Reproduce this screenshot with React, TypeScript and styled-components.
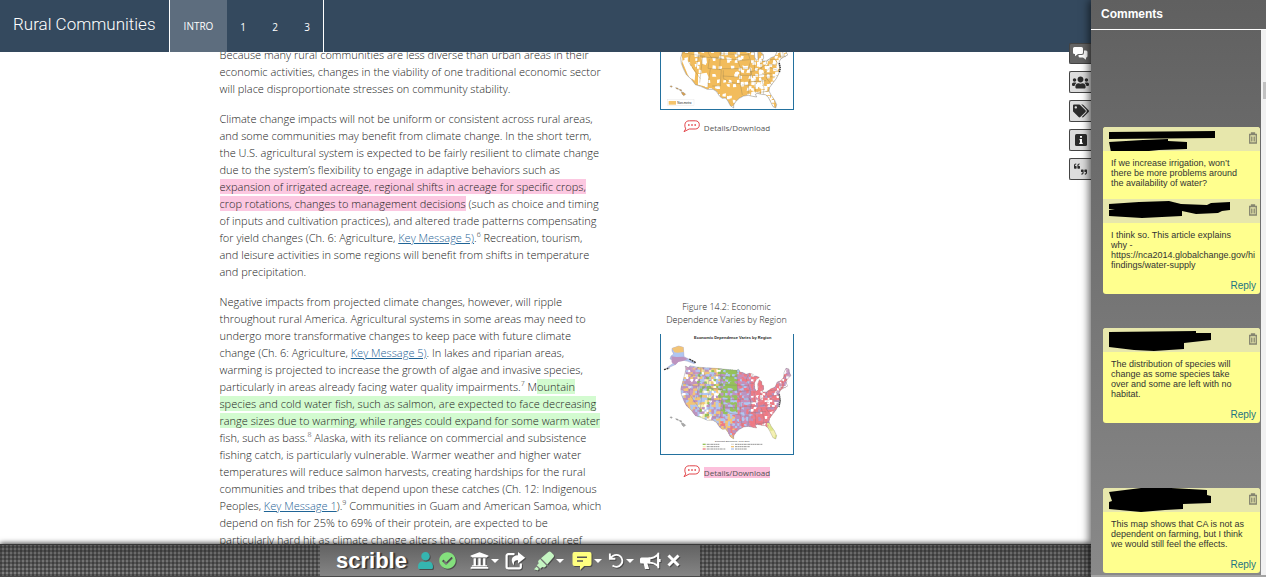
import React from "react";
import styled, { createGlobalStyle } from "styled-components";
import {
  FaCheckCircle,
  FaHighlighter,
  FaQuoteLeft,
  FaQuoteRight,
  FaTags,
  FaUniversity,
  FaUser,
  FaUsers,
} from "react-icons/fa";

const GlobalStyle = createGlobalStyle`
  * { box-sizing: border-box; }
  body { margin: 0; background: #fff; font-family: "Open Sans", "Noto Sans", sans-serif; }
  button { padding: 0; border: 0; background: none; font: inherit; color: inherit; cursor: pointer; }
  p, h1, h2, figure { margin: 0; }
`;

const Page = styled.div`
  display: grid;
  grid-template-columns: minmax(0, 1fr) 175px;
  height: 100vh;
  overflow: hidden;
`;

const Main = styled.main`
  position: relative;
  display: flex;
  flex-direction: column;
  min-height: 0;
  overflow: hidden;
`;

/* Header */

const Header = styled.header`
  display: flex;
  flex: none;
  height: 52px;
  background: #34495e;
  color: #fff;
`;

const Title = styled.h1`
  min-width: 170px;
  padding: 0 13px 0 13px;
  border-right: 1px solid #fff;
  font: 300 17px/49px Roboto, sans-serif;
  white-space: nowrap;
`;

const Nav = styled.nav`
  display: flex;
  border-right: 1px solid #fff;
`;

const NavLink = styled.a<{ $active?: boolean }>`
  min-width: ${(p) => (p.$active ? 57 : 32)}px;
  background: ${(p) => (p.$active ? "#5d6d7e" : "transparent")};
  color: #fff;
  font-size: 10px;
  line-height: ${(p) => (p.$active ? 53 : 55)}px;
  text-align: center;
  text-decoration: none;
`;

/* Article */

const Reader = styled.div`
  flex: 1;
  min-height: 0;
  padding-right: 2px;
  overflow: hidden;
`;

const Article = styled.article`
  display: grid;
  grid-template-columns: 375px 134px;
  column-gap: 65px;
  max-width: 650px;
  margin: -6px auto 0;
`;

const Prose = styled.div`
  display: flex;
  flex-direction: column;
  gap: 13px;
  color: #222;
  font-size: 11px;
  font-weight: 300;
  line-height: 17px;
  white-space: nowrap;

  a {
    color: #1f6496;
  }

  sup {
    font-size: 7px;
    line-height: 0;
  }
`;

const Mark = styled.mark<{ $tone: "pink" | "green" }>`
  background: ${(p) => (p.$tone === "pink" ? "#fcc8e1" : "#d3fbd0")};
  color: inherit;
`;

const Figures = styled.aside`
  display: flex;
  flex-direction: column;
  gap: 167px;
`;

const Figure = styled.figure`
  display: flex;
  flex-direction: column;
`;

const Caption = styled.figcaption`
  padding-bottom: 8px;
  color: #222;
  font-size: 9px;
  font-weight: 300;
  line-height: 13px;
  text-align: center;
`;

const MapFrame = styled.div`
  border: 1px solid #23719f;
  border-top: 0;

  svg {
    display: block;
    width: 100%;
  }
`;

const Details = styled.a<{ $marked?: boolean }>`
  display: flex;
  align-items: center;
  justify-content: center;
  gap: 4px;
  padding-top: 10px;
  color: #555;
  font-size: 8px;
  line-height: 14px;
  text-decoration: none;

  span {
    line-height: 11px;
    margin-top: 2px;
    background: ${(p) => (p.$marked ? "#fcc0dc" : "transparent")};
  }
`;

/* Bottom toolbar */

const Toolbar = styled.footer`
  position: relative;
  display: flex;
  flex: none;
  justify-content: center;
  height: 33px;
  padding-right: 71px;
  border-top: 1px solid #383838;
  border-bottom: 1px solid #4a4a4a;
  background:
    repeating-linear-gradient(90deg, rgba(35, 35, 35, 0.45) 0 2px, transparent 2px 4px),
    repeating-linear-gradient(0deg, rgba(35, 35, 35, 0.4) 0 2px, transparent 2px 4px),
    linear-gradient(#626262, #828282);
  box-shadow: 0 -1px 5px rgba(0, 0, 0, 0.7);
`;

const ToolGroup = styled.div`
  display: flex;
  align-items: center;
  width: 380px;
  padding-left: 16px;
  background: linear-gradient(#626262, #858585);
  color: #fff;
`;

const Brand = styled.strong`
  width: 81px;
  font: 700 22px/30px "Liberation Sans", Arial, sans-serif;
  text-shadow: 2px 1px 1px #333;
`;

const Tool = styled.button<{ $width: number; $color?: string }>`
  display: flex;
  align-items: center;
  gap: 2px;
  width: ${(p) => p.$width}px;
  height: 30px;
  color: ${(p) => p.$color ?? "#fff"};

  svg {
    flex: none;
    filter: drop-shadow(1px 1px 0 #4c4c4c);
  }
`;

const Caret = styled.i`
  border: 4px solid transparent;
  border-top-color: #fff;
  border-bottom: 0;
`;

/* Side tabs */

const Tabs = styled.div`
  position: absolute;
  top: 43px;
  right: 0;
  display: flex;
  flex-direction: column;
  gap: 7px;
`;

const Tab = styled.button<{ $active?: boolean }>`
  display: flex;
  align-items: center;
  justify-content: center;
  width: 22px;
  height: ${(p) => (p.$active ? 21 : 22)}px;
  && {
    border: 1px solid #444;
    border-right: 0;
    border-radius: 2px 0 0 2px;
    background: ${(p) => (p.$active ? "#646464" : "#dcdcdc")};
    color: ${(p) => (p.$active ? "#fff" : "#2b2b2b")};
  }
`;

/* Comments panel */

const Panel = styled.aside`
  position: relative;
  display: flex;
  flex-direction: column;
  min-height: 0;
  border-bottom: 2px solid #a4a4a4;
  background: linear-gradient(#606060, #898989);
  box-shadow: -2px 0 8px rgba(0, 0, 0, 0.6);
  font-family: "Liberation Sans", Arial, sans-serif;
`;

const PanelTitle = styled.h2`
  flex: none;
  height: 30px;
  padding-left: 10px;
  border-bottom: 1px solid #fff;
  color: #fff;
  font-size: 12px;
  line-height: 28px;
`;

const PanelBody = styled.div`
  display: flex;
  flex: 1;
  min-height: 0;
`;

const Notes = styled.div`
  flex: 1;
  min-width: 0;
  padding: 97px 1px 0 12px;
  overflow: hidden;
`;

const Scrollbar = styled.div`
  width: 5px;
  padding: 52px 0 0 2px;
  background: #f1f1f1;
`;

const Thumb = styled.div`
  height: 17px;
  background: #c1c1c1;
`;

const Note = styled.section<{ $gap?: number }>`
  margin-top: ${(p) => p.$gap ?? 0}px;
  border-radius: 3px;
  background: #ffff8e;
  overflow: hidden;
`;

const NoteHead = styled.div`
  display: flex;
  justify-content: space-between;
  height: 24px;
  padding-right: 2px;
  background: #e7e7ac;
`;

const NoteText = styled.p<{ $last?: boolean }>`
  padding: 7px 0 ${(p) => (p.$last ? 10 : 11)}px 8px;
  color: #333;
  font-size: 9px;
  line-height: 10px;
  white-space: nowrap;
`;

const Reply = styled.button`
  display: block;
  margin: 0 4px 2px auto;
  && {
    color: #1c7383;
    font-size: 10px;
    line-height: 12px;
  }
`;

const TrashButton = styled.button`
  display: flex;
  align-items: center;
  height: 22px;
`;

/* Icons */

const TrashIcon = () => (
  <svg width="10" height="12" viewBox="0 0 10 12" fill="none" stroke="#85856f">
    <path d="M1 2.500h8M3.500 2V1h3v1M1.700 3v8h6.600V3M3.800 4.500v5M6.200 4.500v5" strokeWidth="1.300" />
  </svg>
);

const BubbleIcon = () => (
  <svg width="17" height="13" viewBox="0 0 17 13">
    <path
      d="M1 11.7l1.7-2.8C1.4 6.4 1.5 3 3.4 1.6 4.2.9 5.5.8 6.5.8h5.8c2.5 0 4 1.5 4 4s-1.5 4.2-4 4.2H6.2z"
      fill="#fff"
      stroke="#e2474c"
    />
    <path d="M5 5h1.6M8.2 5h1.6M11.4 5H13" stroke="#e2474c" strokeWidth="1.4" />
  </svg>
);

const ChatIcon = () => (
  <svg width="15" height="13" viewBox="0 0 15 13" fill="currentColor">
    <path d="M1.500 0h7A1.500 1.500 0 0 1 10 1.500v4A1.500 1.500 0 0 1 8.500 7H5L2 9.300V7h-.5A1.500 1.500 0 0 1 0 5.500v-4A1.500 1.500 0 0 1 1.500 0z" />
    <path d="M11 3.500h2A1.500 1.500 0 0 1 14.500 5v4A1.500 1.500 0 0 1 13 10.500v2.300l-3-2.300H7A1.500 1.500 0 0 1 5.500 9V8h3.200A2.300 2.300 0 0 0 11 5.700z" />
  </svg>
);

const InfoIcon = () => (
  <svg width="12" height="12" viewBox="0 0 12 12">
    <rect width="12" height="12" rx="1.500" fill="#2b2b2b" />
    <path d="M5 2h2v1.800H5zM4.500 5H7v3.700h.8V10H4.300V8.700H5V6.200h-.5z" fill="#fff" />
  </svg>
);

const Quotes = styled.span`
  display: flex;
  gap: 1px;

  svg:last-child {
    margin-top: 6px;
  }
`;

const ShareIcon = () => (
  <svg width="21" height="19" viewBox="0 0 21 19">
    <path
      d="M9.500 3.200H3.200a1.600 1.600 0 0 0-1.600 1.600v11a1.600 1.600 0 0 0 1.600 1.600h11a1.600 1.600 0 0 0 1.600-1.600v-3.300"
      fill="none"
      stroke="currentColor"
      strokeWidth="2.200"
    />
    <path d="M13 1l7.200 5.800L13 12.400V9.200c-3.600 0-4.600 1.800-3.700 5.300C5.200 10.700 5.900 4.500 13 4.300z" fill="currentColor" />
  </svg>
);

const NoteIcon = () => (
  <svg width="20" height="20" viewBox="0 0 20 20">
    <path d="M2.500 1h15A2 2 0 0 1 19.500 3v10a2 2 0 0 1-2 2h-5.300L8 19v-4H2.500a2 2 0 0 1-2-2V3a2 2 0 0 1 2-2z" fill="#ffff80" />
    <path d="M5 6.300h10M5 10h6" stroke="#555" strokeWidth="1.500" />
  </svg>
);

const UndoIcon = () => (
  <svg width="16" height="17" viewBox="0 0 17 17" fill="none" stroke="currentColor" strokeWidth="2">
    <path d="M2 1v5.700h5.800M2.500 6.300C5 2.500 9.300 1.600 12.300 3.500c3.400 2.200 3.900 6.600 1.400 9.500-2.300 2.600-6 3-8.900.9" />
  </svg>
);

const MegaphoneIcon = () => (
  <svg width="21" height="18" viewBox="0 0 21 18">
    <path d="M1.500 5.500H10v6H1.500A1.500 1.500 0 0 1 0 10V7a1.500 1.500 0 0 1 1.500-1.500zM3.500 11h3.700l2 6H5z" fill="currentColor" />
    <path d="M9.500 6.300c3.200 0 6.300-1.700 8.500-3.800v11.600c-2.200-2-5.300-3.500-8.500-3.500z" fill="none" stroke="currentColor" strokeWidth="1.800" />
    <path d="M18.300.7v15.600M19.700 7v3" stroke="currentColor" strokeWidth="1.800" />
  </svg>
);

const CloseIcon = () => (
  <svg width="13" height="13" viewBox="0 0 13 13" stroke="currentColor" strokeWidth="3">
    <path d="M1.500 1.500l10 10M11.500 1.500l-10 10" />
  </svg>
);

/* Maps */

const OUTLINE =
  "M150 212L168 216 225 220 290 226 296 223 300 231 312 234 318 238 328 235 340 238 334 244 347 243 358 247 349 254 343 264 344 280 349 289 354 284 353 266 358 254 365 260 366 270 370 271 371 282 366 291 380 291 393 281 404 277 408 270 411 262 424 256 431 247 432 233 438 220 447 222 448 232 453 242 444 250 438 259 440 268 444 272 432 279 423 284 418 292 417 302 420 316 416 330 408 345 398 358 389 370 387 381 393 393 403 407 410 422 407 432 399 428 391 412 385 400 376 392 365 391 352 388 346 391 350 399 338 397 325 394 311 396 298 403 287 413 281 423 281 432 271 425 264 412 257 402 247 403 239 397 229 382 219 376 202 376 182 367 166 362 154 346 139 332 131 316 124 298 122 282 127 265 132 246 137 226 136 213 145 218z";

const STATE_LINES =
  "M136 236l47 9M127 266l68 11M183 216l-8 64-6 30M150 272l-3 24 34 48M190 218l4 22 12 16-1 12 8 12h26M188 278l-9 78M170 277l76 7M219 240l28 3-5 44M208 285l-4 28 39 4M211 314l-8 56M243 220l-4 98M240 245h50M239 269l51 2M242 285l53 2M244 314h57M248 336l53 3M244 316l-3 50h-24M250 319v24l20 12 32 5M290 226l3 64 8 20v50l6 33M292 272h34M295 290l33-3M303 312h28l2 22h-32M325 240l-6 12 7 20 6 20-5 16 8 18-8 30-3 36M306 363h21M330 265h13M342 290l2 26M362 292l2 25M331 324l27-8 21-16 1-9M329 336l66-7M325 354l53-4M345 346l2 41M364 340l8 32-2 18M350 387l36-6M378 341l18 22M378 340l28-3M380 289l24-4 12 16M381 304l28-3M390 311l-21 20M390 311l28 10M417 260l6 24M427 255l3 22M433 240l8 20M420 276l18 2";

const makeRandom = (seed: number) => () => {
  seed = (seed * 16807) % 2147483647;
  return seed / 2147483647;
};

const PURPLE = "#bd93bf";
const BLUE = "#b0c6f2";
const ORANGE = "#f2c477";
const GREEN = "#95c25a";
const RED = "#ee7a84";
const CREAM = "#f4f0b4";
const WHITE = "#ffffff";

const economyColors = (x: number, y: number) => {
  if (x > 380 && y > 385) return [CREAM, CREAM, "#dfe68a"];
  if (x < 172) return y > 300 ? [PURPLE, PURPLE, ORANGE, BLUE] : [PURPLE, BLUE, PURPLE, "#cf9abf", ORANGE, WHITE];
  if (x < 210) return [BLUE, BLUE, PURPLE, GREEN, CREAM, ORANGE, WHITE];
  if (x < 243) return y > 330 ? [BLUE, PURPLE, ORANGE] : [GREEN, BLUE, PURPLE, ORANGE, ORANGE, WHITE];
  if (x < 292) return y > 352 ? [ORANGE, PURPLE, BLUE, RED] : y > 318 ? [GREEN, PURPLE, BLUE] : [GREEN, GREEN, GREEN, GREEN, BLUE, PURPLE];
  if (x < 332) return [PURPLE, PURPLE, RED, "#d58ab0", BLUE];
  if (x > 410) return [PURPLE, RED, "#cba0c0", WHITE];
  return [RED, RED, RED, "#e88494", PURPLE, WHITE];
};

/* One irregular county-sized patch for each cell of a jittered grid. */
const buildCounties = (seed: number, step: number, colors: (x: number, y: number) => string[]) => {
  const random = makeRandom(seed);
  const cells: { d: string; fill: string }[] = [];
  for (let y = 205; y < 440; y += step) {
    for (let x = 118; x < 460; x += step) {
      const pick = colors(x, y);
      const fill = pick[Math.floor(random() * pick.length)];
      const j = () => Math.round((random() * step) / 2);
      cells.push({ fill, d: `M${x - j()} ${y - j()}L${x + step + j()} ${y - j()}L${x + step + j()} ${y + step + j()}L${x - j()} ${y + step + j()}z` });
    }
  }
  return cells;
};

const ECONOMY = buildCounties(421, 7, economyColors);
const RURAL = buildCounties(97, 6, (x) =>
  x > 320
    ? [WHITE, WHITE, "none", "none", "none", "none", "none"]
    : [WHITE, "none", "none", "none", "none", "none", "none", "none", "none", "none", "none", "none"],
);

const Hawaii = ({ fill }: { fill: string }) => (
  <g fill={fill} stroke="#777" strokeWidth="1">
    <path d="M90 367l4-2 3 3-4 2zM107 371l6 1 3 4-6-1zM118 376l6 1 1 4-5-1zM124 383l8 3 5 5-6 4-5-5z" />
  </g>
);

const RuralMap = () => (
  <svg viewBox="63 3 396 189" role="img" aria-label="Map of rural areas">
    <clipPath id="rural-land">
      <path d={OUTLINE} />
    </clipPath>
    <g transform="translate(0 -243)">
      <g clipPath="url(#rural-land)">
        <path d={OUTLINE} fill="#f2bc5c" />
        {RURAL.map((c, i) => (
          <path key={i} d={c.d} fill={c.fill} />
        ))}
        <path d="M126 290l14-4 14 22 12 18-2 24-20-16zM174 330l26-4 6 14-6 28-26-6zM185 282l14-2 2 18-14 2z" fill="#fff" />
      </g>
      <path d={STATE_LINES} fill="none" stroke="#8d7a50" strokeWidth="1" />
      <path d={OUTLINE} fill="none" stroke="#666" strokeWidth="1.200" />
      <path d="M418 297l3 16-3 13" fill="none" stroke="#333" strokeWidth="4" strokeDasharray="4 2" />
      <Hawaii fill="#d9a04f" />
    </g>
    <rect x="82" y="163" width="80" height="19" fill="#fff" stroke="#ddd" />
    <rect x="86" y="168" width="22" height="11" fill="#f4c46d" />
    <text x="112" y="177" fontSize="9" fontFamily="Liberation Sans, sans-serif" fill="#222">
      Non-metro
    </text>
  </svg>
);

const EconomyMap = () => (
  <svg viewBox="63 117 396 360" role="img" aria-label="Map of economic dependence by region">
    <clipPath id="economy-land">
      <path d={OUTLINE} />
    </clipPath>
    <text x="278" y="132" fontSize="12" fontWeight="700" textAnchor="middle" fontFamily="Liberation Sans, sans-serif" fill="#222">
      Economic Dependence Varies by Region
    </text>
    <path d="M96 160l20-7 14 4 2 28 14 7 20 11-3 3-20-7-15-4-12 2-8 11-20 9-8 2 18-13 4-10-12-4 3-9 8-6-5-9z" fill={BLUE} stroke="#8b84ac" />
    <path d="M96 160l20-7 14 4 1 14-18 2-10-1z" fill={ORANGE} />
    <path d="M94 184l16 2 20-1 14 7-15 6-14 3-10 9-10-8z" fill={PURPLE} />
    <path d="M148 192l19 11M72 224l16-5" stroke="#333" strokeWidth="4" strokeDasharray="6 2" fill="none" />
    <g clipPath="url(#economy-land)">
      {ECONOMY.map((c, i) => (
        <path key={i} d={c.d} fill={c.fill} />
      ))}
    </g>
    <path d={STATE_LINES} fill="none" stroke="#86707e" strokeWidth="1" />
    <path d={OUTLINE} fill="none" stroke="#888" strokeWidth="1" />
    <path d="M418 298l3 18-4 20" fill="none" stroke="#3b3b3b" strokeWidth="4" strokeDasharray="4 2" />
    <Hawaii fill="#aaa" />
    <text x="277" y="441" fontSize="7" textAnchor="middle" fontFamily="Liberation Sans, sans-serif" fill="#333">
      Dominant Economies, 1998-2000
    </text>
    <g strokeWidth="4">
      <path d="M188 448h9" stroke={GREEN} />
      <path d="M188 455h9" stroke={CREAM} />
      <path d="M188 462h9" stroke={RED} />
      <path d="M273 448h9" stroke="#ddd" />
      <path d="M273 455h9" stroke={ORANGE} />
      <path d="M273 462h9" stroke={BLUE} />
    </g>
    <path d="M200 448h38M200 455h38M200 462h56M285 448h82M285 455h44M285 462h36" stroke="#999" strokeWidth="3" strokeDasharray="7 1 4 1" />
  </svg>
);

/* Blacked-out author names */

const Redaction = ({ shape }: { shape: string }) => (
  <svg width="130" height="24" viewBox="0 0 130 24" aria-hidden="true">
    <path d={shape} fill="#000" />
  </svg>
);

const SCRIBBLES = [
  "M6 5l106-1v7l-106 1zM6 15l34-2 25-1v2l19 1v7l-28 1-30 3-18-1z",
  "M6 5l30-2 30-1 12 3 26 1 4-2 19-1v8l-8 1-4 2-22 1-14-3v5l-40 2-33-2v-6l50-2-44 2-6-1z",
  "M6 4l87-1v2h15v7l-27 3v6l-30 2-20-1-25-3z",
  "M6 4l32-4 30 0 36 2v5l4 1v7l-28 1v5l-18 1-24 2-32-3v-7l3-1z",
];

const NoteHeader = ({ index }: { index: number }) => (
  <NoteHead>
    <Redaction shape={SCRIBBLES[index]} />
    <TrashButton aria-label="Delete comment">
      <TrashIcon />
    </TrashButton>
  </NoteHead>
);

export default function App() {
  return (
    <>
      <GlobalStyle />
      <Page>
        <Main>
          <Header>
            <Title>Rural Communities</Title>
            <Nav>
              <NavLink href="#intro" $active>INTRO</NavLink>
              <NavLink href="#1">1</NavLink>
              <NavLink href="#2">2</NavLink>
              <NavLink href="#3">3</NavLink>
            </Nav>
          </Header>

          <Reader>
            <Article>
              <Prose>
                <p>
                  Because many rural communities are less diverse than urban areas in their<br />
                  economic activities, changes in the viability of one traditional economic sector<br />
                  will place disproportionate stresses on community stability.
                </p>
                <p>
                  Climate change impacts will not be uniform or consistent across rural areas,<br />
                  and some communities may benefit from climate change. In the short term,<br />
                  the U.S. agricultural system is expected to be fairly resilient to climate change<br />
                  due to the system’s flexibility to engage in adaptive behaviors such as<br />
                  <Mark $tone="pink">
                    expansion of irrigated acreage, regional shifts in acreage for specific crops,<br />
                    crop rotations, changes to management decisions
                  </Mark>{" "}
                  (such as choice and timing<br />
                  of inputs and cultivation practices), and altered trade patterns compensating<br />
                  for yield changes (Ch. 6: Agriculture, <a href="#km5">Key Message 5)</a>.<sup>6</sup> Recreation, tourism,<br />
                  and leisure activities in some regions will benefit from shifts in temperature<br />
                  and precipitation.
                </p>
                <p>
                  Negative impacts from projected climate changes, however, will ripple<br />
                  throughout rural America. Agricultural systems in some areas may need to<br />
                  undergo more transformative changes to keep pace with future climate<br />
                  change (Ch. 6: Agriculture, <a href="#km5">Key Message 5)</a>. In lakes and riparian areas,<br />
                  warming is projected to increase the growth of algae and invasive species,<br />
                  particularly in areas already facing water quality impairments.<sup>7</sup> M
                  <Mark $tone="green">
                    ountain<br />
                    species and cold water fish, such as salmon, are expected to face decreasing<br />
                    range sizes due to warming, while ranges could expand for some warm water
                  </Mark>
                  <br />
                  fish, such as bass.<sup>8</sup> Alaska, with its reliance on commercial and subsistence<br />
                  fishing catch, is particularly vulnerable. Warmer weather and higher water<br />
                  temperatures will reduce salmon harvests, creating hardships for the rural<br />
                  communities and tribes that depend upon these catches (Ch. 12: Indigenous<br />
                  Peoples, <a href="#km1">Key Message 1</a>).<sup>9</sup> Communities in Guam and American Samoa, which<br />
                  depend on fish for 25% to 69% of their protein, are expected to be<br />
                  particularly hard hit as climate change alters the composition of coral reef
                </p>
              </Prose>
              <Figures>
                <Figure>
                  <MapFrame><RuralMap /></MapFrame>
                  <Details href="#figure-1"><BubbleIcon /><span>Details/Download</span></Details>
                </Figure>
                <Figure>
                  <Caption>Figure 14.2: Economic Dependence Varies by Region</Caption>
                  <MapFrame><EconomyMap /></MapFrame>
                  <Details href="#figure-2" $marked><BubbleIcon /><span>Details/Download</span></Details>
                </Figure>
              </Figures>
            </Article>
          </Reader>

          <Toolbar>
            <ToolGroup>
              <Brand>scrible</Brand>
              <Tool $width={22} $color="#35b5b0" aria-label="Account"><FaUser size={17} /></Tool>
              <Tool $width={31} $color="#84e07d" aria-label="Saved"><FaCheckCircle size={17} /></Tool>
              <Tool $width={35} aria-label="Library"><FaUniversity size={19} /><Caret /></Tool>
              <Tool $width={29} aria-label="Share"><ShareIcon /></Tool>
              <Tool $width={38} $color="#c5f5c2" aria-label="Highlight"><FaHighlighter size={20} /><Caret /></Tool>
              <Tool $width={36} aria-label="Note"><NoteIcon /><Caret /></Tool>
              <Tool $width={32} aria-label="Undo"><UndoIcon /><Caret /></Tool>
              <Tool $width={27} aria-label="Announcements"><MegaphoneIcon /></Tool>
              <Tool $width={16} aria-label="Close"><CloseIcon /></Tool>
            </ToolGroup>
          </Toolbar>

          <Tabs>
            <Tab $active aria-label="Comments"><ChatIcon /></Tab>
            <Tab aria-label="People"><FaUsers size={17} /></Tab>
            <Tab aria-label="Tags"><FaTags size={16} /></Tab>
            <Tab aria-label="Info"><InfoIcon /></Tab>
            <Tab aria-label="Citations">
              <Quotes><FaQuoteLeft size={6} /><FaQuoteRight size={6} /></Quotes>
            </Tab>
          </Tabs>
        </Main>

        <Panel>
          <PanelTitle>Comments</PanelTitle>
          <PanelBody>
            <Notes>
              <Note>
                <NoteHeader index={0} />
                <NoteText>
                  If we increase irrigation, won’t<br />
                  there be more problems around<br />
                  the availability of water?
                </NoteText>
                <NoteHeader index={1} />
                <NoteText $last>
                  I think so. This article explains<br />
                  why -<br />
                  https://nca2014.globalchange.gov/hi<br />
                  findings/water-supply
                </NoteText>
                <Reply>Reply</Reply>
              </Note>
              <Note $gap={34}>
                <NoteHeader index={2} />
                <NoteText $last>
                  The distribution of species will<br />
                  change as some species take<br />
                  over and some are left with no<br />
                  habitat.
                </NoteText>
                <Reply>Reply</Reply>
              </Note>
              <Note $gap={65}>
                <NoteHeader index={3} />
                <NoteText $last>
                  This map shows that CA is not as<br />
                  dependent on farming, but I think<br />
                  we would still feel the effects.
                </NoteText>
                <Reply>Reply</Reply>
              </Note>
            </Notes>
            <Scrollbar><Thumb /></Scrollbar>
          </PanelBody>
        </Panel>
      </Page>
    </>
  );
}
